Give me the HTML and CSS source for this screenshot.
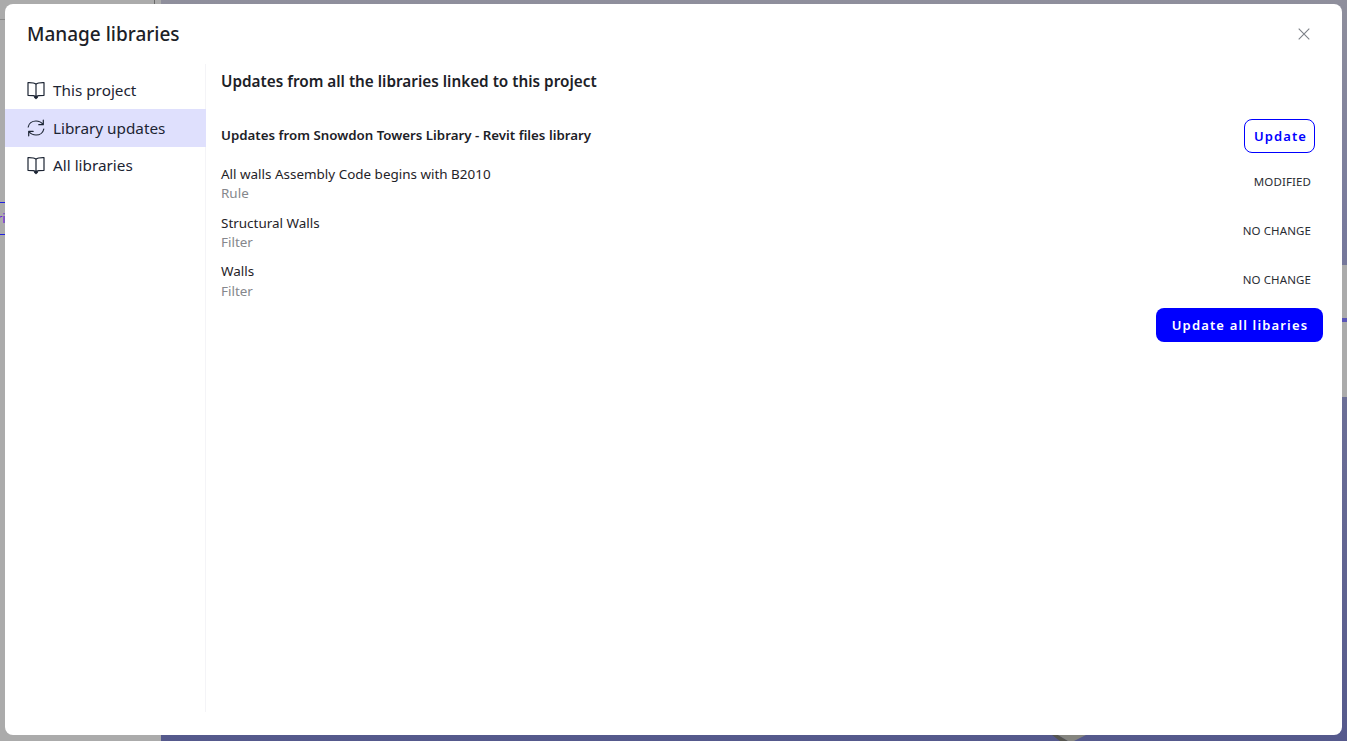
FILE: index.html
```html
<!DOCTYPE html>
<html lang="en">
<head>
<meta charset="utf-8">
<title>Manage libraries</title>
<link rel="stylesheet" href="styles.css">
</head>
<body>
<div class="backdrop">
  <div class="bg-left">
    <span class="bg-line-top"></span>
    <span class="bg-tick"></span>
    <span class="bg-tab"><span class="bg-tab-text">ri</span></span>
  </div>
  <div class="bg-right">
    <span class="bg-panel"><span class="bg-panel-bar"></span></span>
    <svg class="bg-model" viewBox="0 0 34 6" width="34" height="6"><path class="m-dark" d="M0 0h6l10 6H8z"/><path class="m-light" d="M6 0h28l-12 6h-6z"/></svg>
  </div>
</div>
<div class="dialog">
  <header class="dialog-head">
    <h1>Manage libraries</h1>
    <svg class="close" viewBox="0 0 12 12" width="12" height="12"><path d="M.7.7l10.6 10.6M11.300.7L.7 11.300"/></svg>
  </header>
  <div class="dialog-body">
    <nav class="side">
      <a class="nav-item">
        <svg class="ico" viewBox="0 0 20 20" width="20" height="20"><path d="M10 4.200C8.500 2.900 6 2.600 2 2.700v12.600c4 0 6.500.1 8 1.300 1.500-1.200 4-1.300 8-1.300V2.700c-4-.1-6.500.2-8 1.500zM10 4.200v14M8.600 17.200l1.400 1.300 1.400-1.300"/></svg>
        This project</a>
      <a class="nav-item active">
        <svg class="ico" viewBox="0 0 20 20" width="20" height="20"><path d="M2.200 9C2.800 5.600 6 3 10 3c2.900 0 5.400 1.300 7 3.500M17.800 11c-.6 3.400-3.800 6-7.800 6-2.900 0-5.400-1.300-7-3.500M17.300 2.200v4.500h-4.500M2.700 17.800v-4.500h4.500"/></svg>
        Library updates</a>
      <a class="nav-item">
        <svg class="ico" viewBox="0 0 20 20" width="20" height="20"><path d="M10 4.200C8.500 2.900 6 2.600 2 2.700v12.600c4 0 6.500.1 8 1.300 1.500-1.200 4-1.300 8-1.300V2.700c-4-.1-6.500.2-8 1.500zM10 4.200v14M8.600 17.200l1.400 1.300 1.400-1.300"/></svg>
        All libraries</a>
    </nav>
    <main class="content">
      <h2>Updates from all the libraries linked to this project</h2>
      <div class="lib-head">
        <h3>Updates from Snowdon Towers Library - Revit files library</h3>
        <button class="btn btn-outline">Update</button>
      </div>
      <div class="rows">
        <div class="row">
          <div><div class="name">All walls Assembly Code begins with B2010</div><div class="kind">Rule</div></div>
          <span class="status">MODIFIED</span>
        </div>
        <div class="row">
          <div><div class="name">Structural Walls</div><div class="kind">Filter</div></div>
          <span class="status">NO CHANGE</span>
        </div>
        <div class="row">
          <div><div class="name">Walls</div><div class="kind">Filter</div></div>
          <span class="status">NO CHANGE</span>
        </div>
      </div>
      <div class="foot"><button class="btn btn-solid">Update all libaries</button></div>
    </main>
  </div>
</div>
</body>
</html>
```
FILE: styles.css
```css
* { box-sizing: border-box; }
html, body { margin: 0; height: 100%; overflow: hidden; }
body { font-family: "Noto Sans", sans-serif; color: #1f2328; background: #ababab; position: relative; }
.backdrop { position: absolute; inset: 0; display: flex; }
.bg-left { width: 161px; background: #ababab; position: relative; }
.bg-right { flex: 1; position: relative; background: linear-gradient(180deg, #8f8f9c 0, #787a9c 30%, #55598c 100%); }
.bg-line-top { position: absolute; left: 0; top: 19px; width: 5px; height: 1px; background: #8a8a8a; }
.bg-tick { position: absolute; left: 154px; top: 0; width: 1px; height: 4px; background: #6a6a6a; }
.bg-tab { position: absolute; left: 0; top: 202px; width: 5px; height: 33px; overflow: hidden; border-top: 1px solid #2020e0; border-bottom: 1px solid #2020e0; }
.bg-tab-text { display: block; margin-left: -3px; font-size: 13px; line-height: 31px; color: #6a1fd8; }
.bg-panel { position: absolute; right: 0; top: 265px; width: 5px; height: 132px; background: #ababab; }
.bg-panel-bar { position: absolute; left: 0; top: 53px; width: 100%; height: 4px; background: #5a55b8; }
.bg-model { position: absolute; left: 891px; bottom: 0; }
.m-dark { fill: #55554f; }
.m-light { fill: #85857f; }
.dialog { position: absolute; left: 5px; top: 4px; width: 1337px; height: 731px; background: #fff; border-radius: 8px; display: flex; flex-direction: column; }
.dialog-head { height: 60px; flex: none; display: flex; align-items: center; justify-content: space-between; padding: 0 32px 0 22px; }
.dialog-head h1 { margin: 0; font-size: 19px; font-weight: 500; line-height: 26px; color: #1c2127; }
.close { fill: none; stroke: #7c8087; stroke-width: 1.100; }
.dialog-body { flex: 1; display: flex; padding-bottom: 23px; min-height: 0; }
.side { width: 201px; flex: none; border-right: 1px solid #f4f4f7; padding-top: 7px; }
.nav-item { height: 38px; margin-right: -1px; display: flex; align-items: center; gap: 7px; padding-left: 21px; font-size: 15.300px; color: #1c2433; }
.nav-item:last-child { height: 36px; }
.nav-item.active { background: #dfe0fd; position: relative; }
.ico { flex: none; fill: none; stroke: #1c2433; stroke-width: 1.200; stroke-linejoin: round; stroke-linecap: round; }
.content { flex: 1; padding: 6px 19px 0 15px; }
.content h2 { margin: 0; font-size: 15.300px; font-weight: 600; line-height: 22px; color: #1c2127; }
.lib-head { display: flex; align-items: center; justify-content: space-between; margin-top: 27px; padding-right: 8px; }
.lib-head h3 { margin: -2px 0 0; font-size: 13.300px; font-weight: 600; line-height: 18px; color: #1c2127; }
.btn { font-family: inherit; font-size: 13px; font-weight: 600; border-radius: 8px; height: 34px; cursor: pointer; }
.btn-outline { width: 71px; padding: 0 0 0 2px; letter-spacing: 1.050px; background: #fff; border: 1px solid #0000ff; color: #0000ff; }
.btn-solid { width: 167px; padding: 0 0 0 1px; letter-spacing: 1.150px; background: #0000ff; border: 0; color: #fff; }
.rows { margin-top: 7.200px; }
.row { display: flex; align-items: center; justify-content: space-between; padding-right: 12px; height: 48.600px; }
.name { font-size: 13.450px; line-height: 19.400px; color: #1f2328; }
.kind { font-size: 13.450px; line-height: 19.400px; color: #85878c; }
.status { font-size: 11.500px; line-height: 16px; letter-spacing: .1px; color: #2a2d33; margin-top: -4.200px; }
.foot { display: flex; justify-content: flex-end; margin-top: 1.800px; }
```
